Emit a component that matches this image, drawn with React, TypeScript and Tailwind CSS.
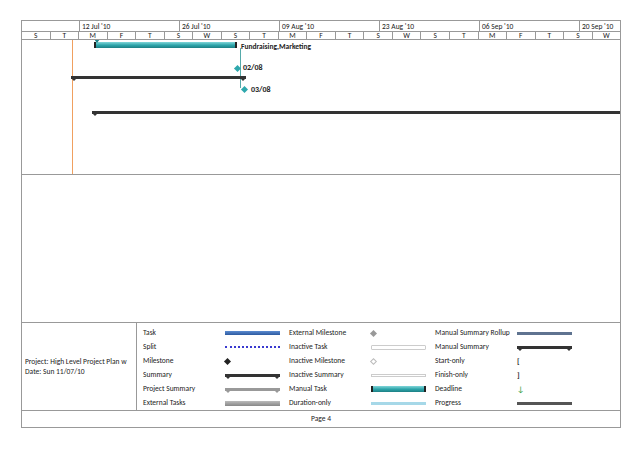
import React from 'react';

const days = ['S','T','M','F','T','S','W','S','T','M','F','T','S','W','S','T','M','F','T','S','W'];
const months = ["12 Jul '10","26 Jul '10","09 Aug '10","23 Aug '10","06 Sep '10","20 Sep '10"];

const Summary = ({ w, c = '#333' }: { w: number; c?: string }) => (
  <div className="relative h-[3px]" style={{ width: w, background: c }}>
    <div className="absolute left-0 top-[2px] w-0 h-0 border-l-[3px] border-r-[3px] border-t-[3px] border-l-transparent border-r-transparent" style={{ borderTopColor: c }} />
    <div className="absolute right-0 top-[2px] w-0 h-0 border-l-[3px] border-r-[3px] border-t-[3px] border-l-transparent border-r-transparent" style={{ borderTopColor: c }} />
  </div>
);

const Diamond = ({ c }: { c: string }) => (
  <div className="w-[5px] h-[5px] rotate-45" style={{ background: c }} />
);

const legend: [string, React.ReactNode][][] = [
  [
    ['Task', <div className="w-[55px] h-[4px] bg-gradient-to-b from-[#5b8bd0] to-[#2d5aa0]" />],
    ['Split', <div className="w-[55px] border-t-2 border-dotted border-[#3a3ad0]" />],
    ['Milestone', <Diamond c="#222" />],
    ['Summary', <Summary w={55} />],
    ['Project Summary', <Summary w={55} c="#999" />],
    ['External Tasks', <div className="w-[55px] h-[5px] bg-gradient-to-b from-[#bbb] to-[#888]" />],
  ],
  [
    ['External Milestone', <Diamond c="#999" />],
    ['Inactive Task', <div className="w-[55px] h-[5px] border border-[#ccc] rounded-[1px]" />],
    ['Inactive Milestone', <div className="w-[5px] h-[5px] rotate-45 border border-[#bbb]" />],
    ['Inactive Summary', <div className="w-[55px] h-[3px] border border-[#ccc]" />],
    ['Manual Task', <div className="w-[55px] h-[6px] bg-gradient-to-b from-[#7fd6da] via-[#2ea8ad] to-[#1d7f84] border-x-2 border-[#222]" />],
    ['Duration-only', <div className="w-[55px] h-[3px] bg-[#a6d8e8]" />],
  ],
  [
    ['Manual Summary Rollup', <div className="w-[55px] h-[3px] bg-[#5f7390]" />],
    ['Manual Summary', <Summary w={55} />],
    ['Start-only', <span className="text-[8px] leading-none font-bold text-[#333]">[</span>],
    ['Finish-only', <span className="text-[8px] leading-none font-bold text-[#333]">]</span>],
    ['Deadline', <span className="text-[8px] leading-none text-[#2a9a3a]">↓</span>],
    ['Progress', <div className="w-[55px] h-[3px] bg-[#555]" />],
  ],
];

export default function App() {
  return (
    <div className="w-[638px] h-[449px] bg-white pt-[20px] pl-[21px] text-[#222]" style={{ fontFamily: 'Carlito, "Liberation Sans", sans-serif' }}>
      <div className="w-[600px] h-[408px] border border-[#999] flex flex-col text-[7.5px]">
        <div className="flex h-[11px] border-b border-[#999]">
          <div className="w-[58px] border-r border-[#999]" />
          {months.map((m, i) => (
            <div key={m} className={`${i < 5 ? 'w-[100px] border-r' : 'flex-1'} border-[#999] pl-[2px] leading-[11px]`}>{m}</div>
          ))}
        </div>
        <div className="flex h-[8px] border-b border-[#999]">
          {days.map((d, i) => (
            <div key={i} className="flex-1 border-r last:border-r-0 border-[#999] text-center leading-[8px]">{d}</div>
          ))}
        </div>
        <div className="relative h-[135px] border-b border-[#999] overflow-hidden">
          <div className="absolute left-[50px] top-0 w-px h-full bg-[#f0a060]" />
          <div className="absolute left-[72px] top-[2px] w-[143px] h-[6px] bg-gradient-to-b from-[#7fd6da] via-[#2ea8ad] to-[#1d7f84] border-x-2 border-[#222]" />
          <div className="absolute left-[72px] top-[-1px] w-0 h-0 border-l-[3px] border-r-[3px] border-t-[4px] border-l-transparent border-r-transparent border-t-[#1d7f84]" />
          <div className="absolute left-[219px] top-[3px] font-bold leading-none">Fundraising,Marketing</div>
          <div className="absolute left-[218px] top-[8px] w-px h-[40px] bg-[#5aa]" />
          <div className="absolute left-[213px] top-[26px]"><Diamond c="#2ea8ad" /></div>
          <div className="absolute left-[221px] top-[23px] font-bold text-[8px] leading-none">02/08</div>
          <div className="absolute left-[49px] top-[36px]"><Summary w={175} /></div>
          <div className="absolute left-[220px] top-[47px]"><Diamond c="#2ea8ad" /></div>
          <div className="absolute left-[229px] top-[45px] font-bold text-[8px] leading-none">03/08</div>
          <div className="absolute left-[70px] top-[71px]"><Summary w={540} /></div>
        </div>
        <div className="flex-1 border-b border-[#999]" />
        <div className="flex h-[88px] border-b border-[#999]">
          <div className="w-[115px] border-r border-[#999] flex flex-col justify-center pl-[3px] leading-[10px]">
            <div className="whitespace-nowrap overflow-hidden">Project: High Level Project Plan w</div>
            <div>Date: Sun 11/07/10</div>
          </div>
          <div className="flex-1 flex pl-[6px] pt-[3px]">
            {legend.map((col, ci) => (
              <div key={ci} className="w-[146px] flex flex-col">
                {col.map(([label, g]) => (
                  <div key={label} className="h-[14px] flex items-center">
                    <div className="w-[82px] whitespace-nowrap">{label}</div>
                    <div className="w-[55px] flex items-center">{g}</div>
                  </div>
                ))}
              </div>
            ))}
          </div>
        </div>
        <div className="h-[16px] flex items-center justify-center">Page 4</div>
      </div>
    </div>
  );
}
